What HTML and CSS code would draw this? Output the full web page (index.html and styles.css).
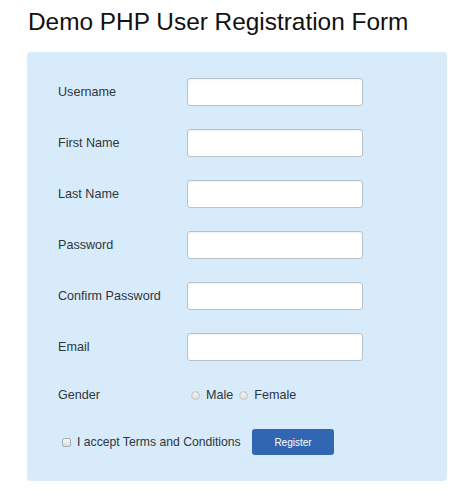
FILE: index.html
```html
<!DOCTYPE html>
<html>
<head>
<meta charset="utf-8">
<link rel="stylesheet" href="styles.css">
</head>
<body>
<h1 class="title">Demo PHP User Registration Form</h1>
<form class="panel">
  <div class="row"><label class="lbl">Username</label><input class="field" type="text"></div>
  <div class="row"><label class="lbl">First Name</label><input class="field" type="text"></div>
  <div class="row"><label class="lbl">Last Name</label><input class="field" type="text"></div>
  <div class="row"><label class="lbl">Password</label><input class="field" type="password"></div>
  <div class="row"><label class="lbl">Confirm Password</label><input class="field" type="password"></div>
  <div class="row"><label class="lbl">Email</label><input class="field" type="text"></div>
  <div class="row gender"><label class="lbl">Gender</label>
    <div class="radios">
      <input class="radio" type="radio" name="g"><span class="opt">Male</span>
      <input class="radio" type="radio" name="g"><span class="opt">Female</span>
    </div>
  </div>
  <div class="row last">
    <label class="terms"><input class="check" type="checkbox"><span>I accept Terms and Conditions</span></label>
    <button class="btn" type="button">Register</button>
  </div>
</form>
</body>
</html>
```
FILE: styles.css
```css
html, body {
  margin: 0;
  padding: 0;
  background: #ffffff;
}
body {
  font-family: "Liberation Sans", Arial, sans-serif;
  width: 474px;
  height: 499px;
  overflow: hidden;
}
.title {
  margin: 0;
  padding: 8px 0 0 28px;
  font-size: 24.4px;
  font-weight: normal;
  line-height: 28px;
  color: #111111;
}
.panel {
  margin: 16px 0 0 27px;
  width: 420px;
  height: 429px;
  box-sizing: border-box;
  background: #d8ebfb;
  border-radius: 4px;
  padding: 26px 0 0 31px;
  display: flex;
  flex-direction: column;
  gap: 23px;
}
.row {
  display: flex;
  align-items: center;
  height: 28px;
}
.lbl {
  width: 129px;
  font-size: 12.6px;
  color: #2f363c;
}
.field {
  width: 176px;
  height: 28px;
  box-sizing: border-box;
  margin: 0;
  border: 1px solid #b8c2cb;
  border-radius: 3px;
  background: #ffffff;
  box-shadow: inset 0 1px 2px rgba(0,0,0,0.06);
}
.gender {
  margin-top: -3px;
}
.radios {
  display: flex;
  align-items: center;
  margin-left: 4px;
  font-size: 12.6px;
  color: #2f363c;
}
.radio {
  appearance: none;
  -webkit-appearance: none;
  width: 9px;
  height: 9px;
  margin: 0 6px 0 0;
  border-radius: 50%;
  border: 1px solid #c4c7ca;
  background: radial-gradient(circle at 50% 40%, #f2f2f2, #d2d4d6);
  box-sizing: border-box;
}
.opt {
  margin-right: 6px;
}
.last {
  margin-top: -3px;
  height: 26px;
}
.terms {
  display: flex;
  align-items: center;
  margin-left: 4px;
  width: 190px;
  font-size: 12.2px;
  color: #2f363c;
}
.check {
  appearance: none;
  -webkit-appearance: none;
  width: 9px;
  height: 9px;
  margin: 0 6px 0 0;
  border: 1px solid #a9aeb3;
  border-radius: 2px;
  background: linear-gradient(#f5f5f5, #dcdee0);
  box-sizing: border-box;
}
.btn {
  width: 82px;
  height: 26px;
  margin: 0;
  border: none;
  border-radius: 3px;
  background: #3166b3;
  color: #ffffff;
  font-family: "Liberation Sans", Arial, sans-serif;
  font-size: 10px;
}
```
